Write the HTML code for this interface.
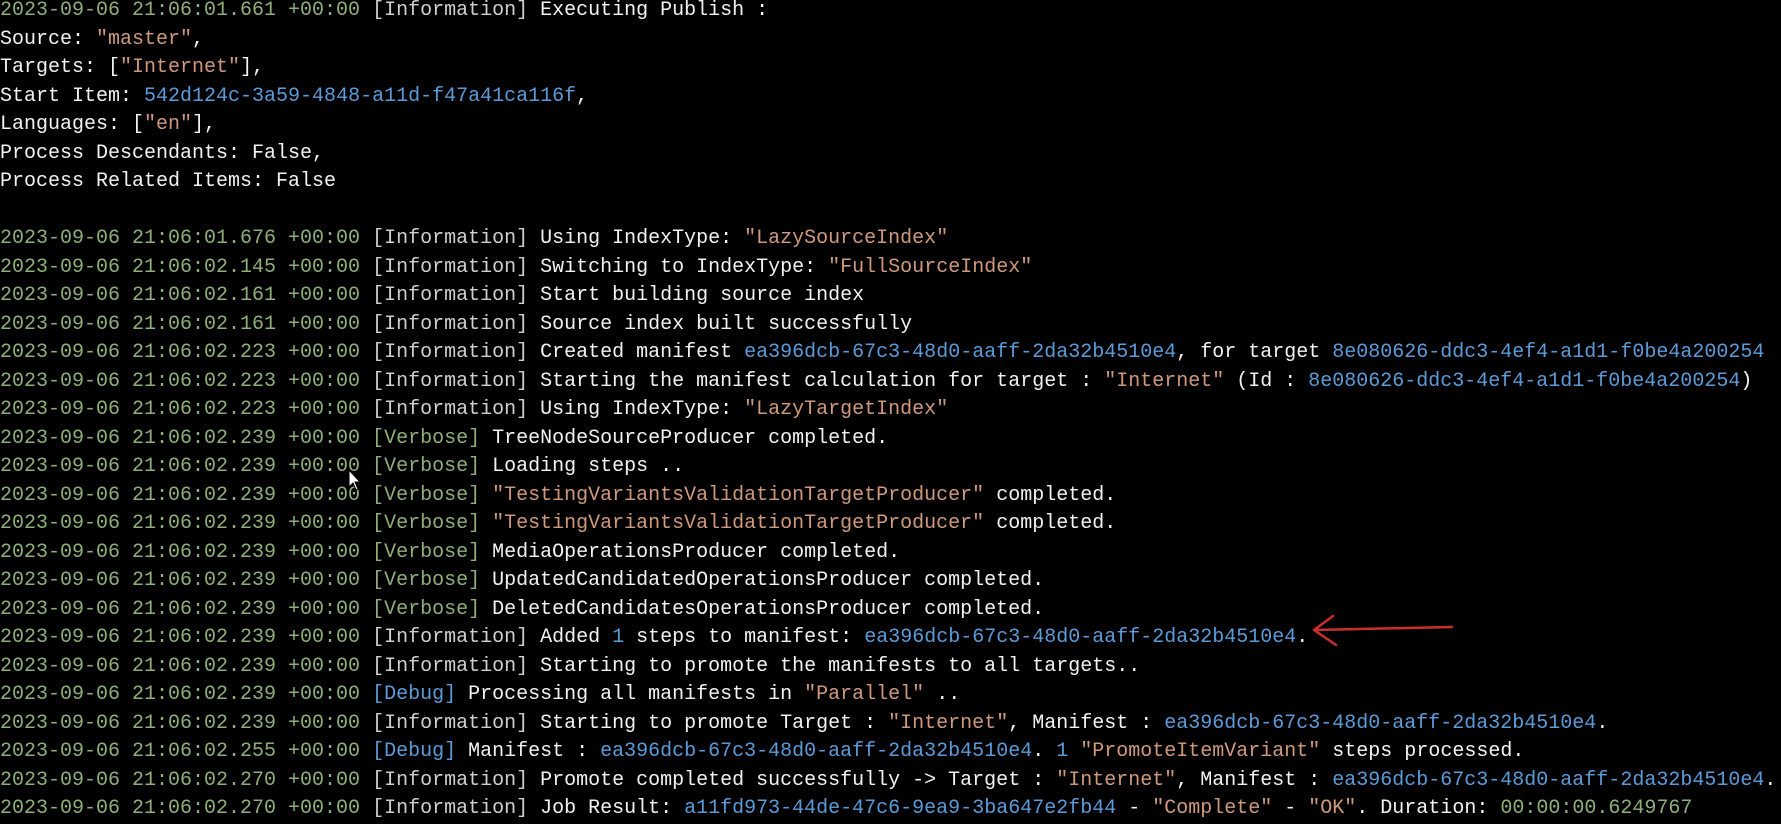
<!DOCTYPE html>
<html><head><meta charset="utf-8"><style>
html,body{margin:0;padding:0;background:#000;width:1781px;height:822px;overflow:hidden}
pre{position:absolute;left:0;top:-3px;margin:0;font-family:"Liberation Mono",monospace;font-size:20px;line-height:28.5px;color:#f2f2f2;white-space:pre}
.g{color:#8fae78}.i{color:#cfcfcf}.s{color:#cf9a7c}.b{color:#5b9bd8}
</style></head><body>
<pre><span class="g">2023-09-06 21:06:01.661 +00:00</span> <span class="i">[Information]</span> Executing Publish :
Source: <span class="s">"master"</span>,
Targets: [<span class="s">"Internet"</span>],
Start Item: <span class="b">542d124c-3a59-4848-a11d-f47a41ca116f</span>,
Languages: [<span class="s">"en"</span>],
Process Descendants: False,
Process Related Items: False

<span class="g">2023-09-06 21:06:01.676 +00:00</span> <span class="i">[Information]</span> Using IndexType: <span class="s">"LazySourceIndex"</span>
<span class="g">2023-09-06 21:06:02.145 +00:00</span> <span class="i">[Information]</span> Switching to IndexType: <span class="s">"FullSourceIndex"</span>
<span class="g">2023-09-06 21:06:02.161 +00:00</span> <span class="i">[Information]</span> Start building source index
<span class="g">2023-09-06 21:06:02.161 +00:00</span> <span class="i">[Information]</span> Source index built successfully
<span class="g">2023-09-06 21:06:02.223 +00:00</span> <span class="i">[Information]</span> Created manifest <span class="b">ea396dcb-67c3-48d0-aaff-2da32b4510e4</span>, for target <span class="b">8e080626-ddc3-4ef4-a1d1-f0be4a200254</span>
<span class="g">2023-09-06 21:06:02.223 +00:00</span> <span class="i">[Information]</span> Starting the manifest calculation for target : <span class="s">"Internet"</span> (Id : <span class="b">8e080626-ddc3-4ef4-a1d1-f0be4a200254</span>)
<span class="g">2023-09-06 21:06:02.223 +00:00</span> <span class="i">[Information]</span> Using IndexType: <span class="s">"LazyTargetIndex"</span>
<span class="g">2023-09-06 21:06:02.239 +00:00 [Verbose]</span> TreeNodeSourceProducer completed.
<span class="g">2023-09-06 21:06:02.239 +00:00 [Verbose]</span> Loading steps ..
<span class="g">2023-09-06 21:06:02.239 +00:00 [Verbose]</span> <span class="s">"TestingVariantsValidationTargetProducer"</span> completed.
<span class="g">2023-09-06 21:06:02.239 +00:00 [Verbose]</span> <span class="s">"TestingVariantsValidationTargetProducer"</span> completed.
<span class="g">2023-09-06 21:06:02.239 +00:00 [Verbose]</span> MediaOperationsProducer completed.
<span class="g">2023-09-06 21:06:02.239 +00:00 [Verbose]</span> UpdatedCandidatedOperationsProducer completed.
<span class="g">2023-09-06 21:06:02.239 +00:00 [Verbose]</span> DeletedCandidatesOperationsProducer completed.
<span class="g">2023-09-06 21:06:02.239 +00:00</span> <span class="i">[Information]</span> Added <span class="b">1</span> steps to manifest: <span class="b">ea396dcb-67c3-48d0-aaff-2da32b4510e4</span>.
<span class="g">2023-09-06 21:06:02.239 +00:00</span> <span class="i">[Information]</span> Starting to promote the manifests to all targets..
<span class="g">2023-09-06 21:06:02.239 +00:00</span> <span class="b">[Debug]</span> Processing all manifests in <span class="s">"Parallel"</span> ..
<span class="g">2023-09-06 21:06:02.239 +00:00</span> <span class="i">[Information]</span> Starting to promote Target : <span class="s">"Internet"</span>, Manifest : <span class="b">ea396dcb-67c3-48d0-aaff-2da32b4510e4</span>.
<span class="g">2023-09-06 21:06:02.255 +00:00</span> <span class="b">[Debug]</span> Manifest : <span class="b">ea396dcb-67c3-48d0-aaff-2da32b4510e4</span>. <span class="b">1</span> <span class="s">"PromoteItemVariant"</span> steps processed.
<span class="g">2023-09-06 21:06:02.270 +00:00</span> <span class="i">[Information]</span> Promote completed successfully -&gt; Target : <span class="s">"Internet"</span>, Manifest : <span class="b">ea396dcb-67c3-48d0-aaff-2da32b4510e4</span>.
<span class="g">2023-09-06 21:06:02.270 +00:00</span> <span class="i">[Information]</span> Job Result: <span class="b">a11fd973-44de-47c6-9ea9-3ba647e2fb44</span> - <span class="s">"Complete"</span> - <span class="s">"OK"</span>. Duration: <span class="g">00:00:00.6249767</span></pre>
<svg style="position:absolute;left:0;top:0" width="1781" height="822">
<path d="M1452 627 L1314 630 M1314 630 L1333 616 M1314 630 L1336 645" stroke="#c8302c" stroke-width="2.5" fill="none" stroke-linecap="round"/>
<path d="M349 470 L349 487 L353 483 L356 490 L358 489 L355 482 L360 482 Z" fill="#fff" stroke="#000" stroke-width="1"/>
</svg>
</body></html>
